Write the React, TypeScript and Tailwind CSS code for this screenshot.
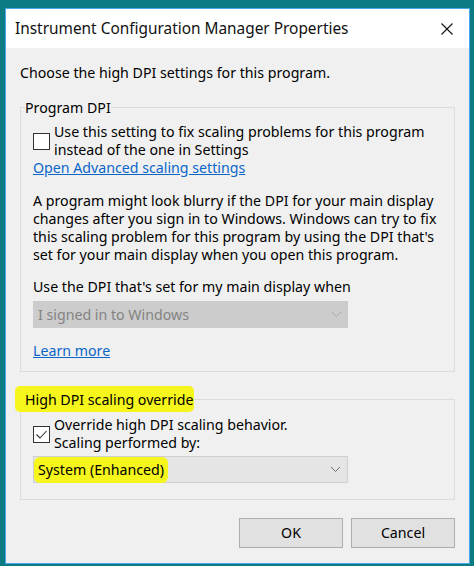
import React from "react";

const font = { fontFamily: '"Noto Sans", "Open Sans", sans-serif' };

function Chevron({ color }: { color: string }) {
  return (
    <svg width="11" height="7" viewBox="0 0 11 7" fill="none">
      <path d="M1 1 L5.5 5.5 L10 1" stroke={color} strokeWidth="1" />
    </svg>
  );
}

function Checkbox({ checked }: { checked?: boolean }) {
  return (
    <div className="w-[17px] h-[17px] shrink-0 border border-[#333333] bg-white flex items-center justify-center">
      {checked && (
        <svg width="15" height="15" viewBox="0 0 15 15" fill="none">
          <path d="M2.5 7.5 L6 11 L12.5 4" stroke="#333333" strokeWidth="1.1" />
        </svg>
      )}
    </div>
  );
}

export default function App() {
  return (
    <div className="w-[474px] h-[566px] bg-[#0c7b83] pt-[8px] pl-[5px] pr-[4px] overflow-hidden" style={font}>
      <div className="border border-[#49a6e6] bg-[#f0f0f0] text-black">
        {/* title bar */}
        <div className="h-[39px] bg-white flex items-center justify-between pl-[9px] pr-[16px]">
          <span className="text-[15.4px] text-[#111]">Instrument Configuration Manager Properties</span>
          <svg width="12" height="12" viewBox="0 0 12 12" fill="none">
            <path d="M0.5 0.5 L11.5 11.5 M11.5 0.5 L0.5 11.5" stroke="#111" strokeWidth="1.1" />
          </svg>
        </div>

        <div className="px-[14px] pt-[15px] pb-[15px] text-[14.2px]">
          <p className="leading-[19px]">Choose the high DPI settings for this program.</p>

          <fieldset className="mt-[16px] border border-[#dcdcdc] px-0">
            <legend className="ml-[4px] leading-[19px]">Program DPI</legend>
            <div className="pl-[12px] pt-[6px] pb-[11px] leading-[18px]">
              <div className="flex items-center gap-[4px]">
                <Checkbox />
                <div>
                  Use this setting to fix scaling problems for this program
                  <br />
                  instead of the one in Settings
                </div>
              </div>
              <a className="text-[#0b66c8] underline">Open Advanced scaling settings</a>
              <p className="mt-[15px] whitespace-nowrap">
                A program might look blurry if the DPI for your main display
                <br />
                changes after you sign in to Windows. Windows can try to fix
                <br />
                this scaling problem for this program by using the DPI that's
                <br />
                set for your main display when you open this program.
              </p>
              <p className="mt-[14px]">Use the DPI that's set for my main display when</p>
              <div className="mt-[5px] w-[315px] h-[27px] bg-[#cccccc] flex items-center justify-between pl-[5px] pr-[6px] text-[#838383]">
                <span>I signed in to Windows</span>
                <Chevron color="#a8a8a8" />
              </div>
              <a className="block mt-[14px] text-[#0b66c8] underline w-fit">Learn more</a>
            </div>
          </fieldset>

          <fieldset className="mt-[18px] border border-[#dcdcdc] px-0">
            <legend className="ml-[4px] leading-[19px]">
              <span className="bg-[#f6f51c] pl-[10px] ml-[-10px] pr-[1px] pt-[4px] pb-[3px] rounded-[5px]">
                High DPI scaling override
              </span>
            </legend>
            <div className="pl-[12px] pt-[7px] pb-[16px] leading-[18px]">
              <div className="flex items-center gap-[4px]">
                <Checkbox checked />
                <div>
                  Override high DPI scaling behavior.
                  <br />
                  Scaling performed by:
                </div>
              </div>
              <div className="mt-[4px] w-[315px] h-[27px] bg-[#e5e5e5] border border-[#cfcfcf] flex items-center justify-between pl-[4px] pr-[6px]">
                <span className="bg-[#f6f51c] px-[4px] ml-[-4px] py-[4px] rounded-[6px]">System (Enhanced)</span>
                <Chevron color="#707070" />
              </div>
            </div>
          </fieldset>

          <div className="mt-[18px] flex justify-end gap-[8px]">
            <button className="w-[104px] h-[30px] bg-[#e1e1e1] border border-[#adadad]">OK</button>
            <button className="w-[104px] h-[30px] bg-[#e1e1e1] border border-[#adadad]">Cancel</button>
          </div>
        </div>
      </div>
    </div>
  );
}
